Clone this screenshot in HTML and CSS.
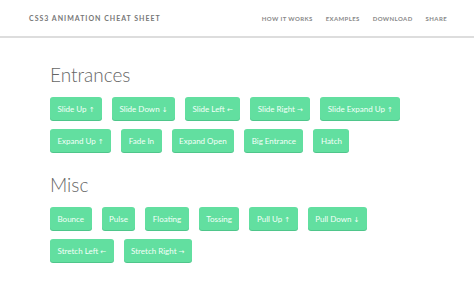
FILE: index.html
```html
<!DOCTYPE html>
<html lang="en">
<head>
  <meta charset="UTF-8" />
  <meta name="viewport" content="width=device-width, initial-scale=1.0" />
  <title>CSS3 Animation Cheat Sheet</title>
  <link rel="stylesheet" href="styles.css">
</head>
<body>
  <header class="top">
    <div class="brand">CSS3 Animation Cheat Sheet</div>
    <nav class="nav">
      <a href="#">How it works</a>
      <a href="#">Examples</a>
      <a href="#">Download</a>
      <a href="#">Share</a>
    </nav>
  </header>

  <main class="content">
    <section class="group">
      <h2>Entrances</h2>
      <div class="buttons">
        <button>Slide Up <span class="arr">↑</span></button>
        <button>Slide Down <span class="arr">↓</span></button>
        <button>Slide Left <span class="arr">←</span></button>
        <button>Slide Right <span class="arr">→</span></button>
        <button>Slide Expand Up <span class="arr">↑</span></button>
        <button>Expand Up <span class="arr">↑</span></button>
        <button>Fade In</button>
        <button>Expand Open</button>
        <button>Big Entrance</button>
        <button>Hatch</button>
      </div>
    </section>

    <section class="group">
      <h2>Misc</h2>
      <div class="buttons">
        <button>Bounce</button>
        <button>Pulse</button>
        <button>Floating</button>
        <button>Tossing</button>
        <button>Pull Up <span class="arr">↑</span></button>
        <button>Pull Down <span class="arr">↓</span></button>
        <button>Stretch Left <span class="arr">←</span></button>
        <button>Stretch Right <span class="arr">→</span></button>
      </div>
    </section>
  </main>
</body>
</html>
```

FILE: styles.css
```css
body {
  margin: 0;
  font-family: Lato, "Open Sans", sans-serif;
  background: #fff;
  color: #666;
}
.top {
  height: 36px;
  border-bottom: 2px solid #ddd;
  display: flex;
  align-items: center;
  justify-content: space-between;
  padding: 0 27px 0 29px;
  box-sizing: content-box;
}
.brand {
  font-size: 7px;
  font-weight: 700;
  letter-spacing: 1px;
  text-transform: uppercase;
  color: #777;
}
.nav {
  display: flex;
  gap: 13px;
}
.nav a {
  font-size: 6px;
  font-weight: 700;
  letter-spacing: 0.4px;
  text-transform: uppercase;
  color: #888;
  text-decoration: none;
}
.content {
  padding: 26px 50px 0;
}
.group {
  margin-bottom: 22px;
}
.group h2 {
  margin: 0 0 11px;
  font-size: 19px;
  font-weight: 300;
  color: #666;
  line-height: 22px;
}
.buttons {
  display: flex;
  flex-wrap: wrap;
  gap: 9px 10px;
  max-width: 360px;
}
.buttons button {
  height: 23px;
  padding: 0 7.5px;
  border: none;
  border-radius: 3px;
  background: #62dfa0;
  box-shadow: 0 1px 0 #4fc68b;
  color: #f4fff9;
  font-family: Lato, sans-serif;
  font-size: 8px;
  cursor: pointer;
}
.arr {
  font-size: 7px;
  font-family: "DejaVu Sans", sans-serif;
}
```
